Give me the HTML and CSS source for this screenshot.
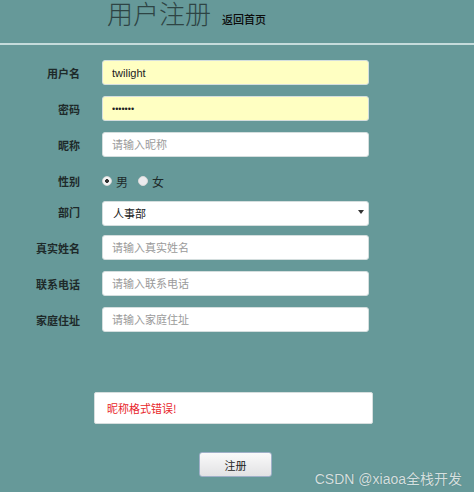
FILE: index.html
```html
<!DOCTYPE html>
<html lang="zh-CN">
<head>
<meta charset="utf-8">
<title>用户注册</title>
<link rel="stylesheet" href="styles.css">
</head>
<body>
<div class="page">
  <header class="header">
    <h1 class="title">用户注册</h1>
    <a class="back" href="#">返回首页</a>
  </header>
  <div class="divider"></div>
  <form class="form">
    <div class="row">
      <label class="label">用户名</label>
      <input class="field filled" type="text" value="twilight">
    </div>
    <div class="row">
      <label class="label">密码</label>
      <input class="field filled pwd" type="password" value="1234567">
    </div>
    <div class="row">
      <label class="label">昵称</label>
      <input class="field" type="text" placeholder="请输入昵称">
    </div>
    <div class="row gender">
      <label class="label">性别</label>
      <div class="radios">
        <input class="radio" type="radio" name="sex" checked><span class="opt">男</span>
        <input class="radio" type="radio" name="sex"><span class="opt">女</span>
      </div>
    </div>
    <div class="row">
      <label class="label">部门</label>
      <div class="select-wrap">
        <select class="field select"><option>人事部</option></select>
      </div>
    </div>
    <div class="row">
      <label class="label">真实姓名</label>
      <input class="field" type="text" placeholder="请输入真实姓名">
    </div>
    <div class="row">
      <label class="label">联系电话</label>
      <input class="field" type="text" placeholder="请输入联系电话">
    </div>
    <div class="row">
      <label class="label">家庭住址</label>
      <input class="field" type="text" placeholder="请输入家庭住址">
    </div>
    <div class="error">昵称格式错误!</div>
    <button class="submit" type="button">注册</button>
  </form>
  <div class="watermark">CSDN @xiaoa全栈开发</div>
</div>
</body>
</html>
```

FILE: styles.css
```css
html, body {
  margin: 0;
  padding: 0;
}
body {
  background: #669999;
  font-family: "Noto Sans CJK SC", "Liberation Sans", sans-serif;
}
.page {
  position: relative;
  width: 474px;
  height: 492px;
  overflow: hidden;
}
.header {
  display: flex;
  align-items: baseline;
  height: 43px;
  padding-left: 107px;
  box-sizing: border-box;
}
.title {
  margin: 1px 0 0 0;
  font-family: "Liberation Sans", "Noto Sans CJK SC", sans-serif;
  font-size: 26px;
  font-weight: 300;
  line-height: 29px;
  color: #2e4444;
}
.back {
  margin-left: 11px;
  font-family: "Liberation Sans", "Noto Sans CJK SC", sans-serif;
  font-size: 11px;
  font-weight: 500;
  line-height: 13px;
  color: #0c0c0c;
  text-decoration: none;
}
.divider {
  height: 2px;
  background: #c6dcdc;
}
.form {
  padding-top: 15px;
}
.row {
  display: flex;
  align-items: center;
  height: 25px;
  margin-bottom: 11px;
}
.label {
  width: 80px;
  margin-right: 22px;
  text-align: right;
  font-size: 11px;
  font-weight: bold;
  color: #1e2a2a;
}
.field {
  box-sizing: border-box;
  width: 267px;
  height: 25px;
  margin: 0;
  padding: 0 9px;
  border: 1px solid #d4dede;
  border-radius: 3px;
  background: #fff;
  font-family: "Liberation Sans", "Noto Sans CJK SC", sans-serif;
  font-size: 11px;
  color: #222;
  outline: none;
}
.field::placeholder {
  color: #9a9a9a;
  font-family: "Noto Sans CJK SC", sans-serif;
}
.filled {
  background: #ffffc2;
}
.pwd {
  font-size: 9px;
}
.gender {
  height: 20px;
  align-items: flex-end;
}
.gender .label {
  line-height: 14px;
}
.radios {
  display: flex;
  align-items: center;
  height: 14px;
}
.radio {
  appearance: none;
  -webkit-appearance: none;
  box-sizing: border-box;
  width: 10px;
  height: 10px;
  margin: 0;
  border-radius: 50%;
  border: 1px solid #d8d8d8;
  background: #ecebee;
}
.radio:checked {
  background: radial-gradient(circle, #333 0, #333 1.6px, #f4f4f4 2.2px);
}
.opt {
  margin-left: 4px;
  margin-right: 10px;
  font-size: 12px;
  color: #1e2a2a;
}
.select-wrap {
  position: relative;
  width: 267px;
  height: 25px;
}
.select {
  appearance: none;
  -webkit-appearance: none;
  padding-left: 10px;
  font-family: "Noto Sans CJK SC", sans-serif;
  color: #222;
}
.select-wrap::after {
  content: "";
  position: absolute;
  right: 5px;
  top: 11px;
  border-left: 3px solid transparent;
  border-right: 3px solid transparent;
  border-top: 4px solid #333;
}
.error {
  box-sizing: border-box;
  width: 279px;
  height: 32px;
  margin: 60px 0 0 94px;
  padding-left: 12px;
  border: 1px solid #d6dede;
  border-radius: 2px;
  background: #fff;
  color: #e8262b;
  font-size: 11px;
  line-height: 30px;
}
.submit {
  display: block;
  box-sizing: border-box;
  width: 73px;
  height: 25px;
  margin: 28px 0 0 199px;
  padding: 0;
  border: 1px solid #9fb0c8;
  border-radius: 3px;
  background: linear-gradient(#fafafa, #e2e2e4);
  font-family: "Noto Sans CJK SC", sans-serif;
  font-size: 11px;
  color: #222;
}
.watermark {
  position: absolute;
  right: 12px;
  bottom: 4px;
  font-family: "Liberation Sans", "Noto Sans CJK SC", sans-serif;
  font-size: 14px;
  color: #d4e0e0;
  text-shadow: 0 0 1px #4e7070;
}
```
